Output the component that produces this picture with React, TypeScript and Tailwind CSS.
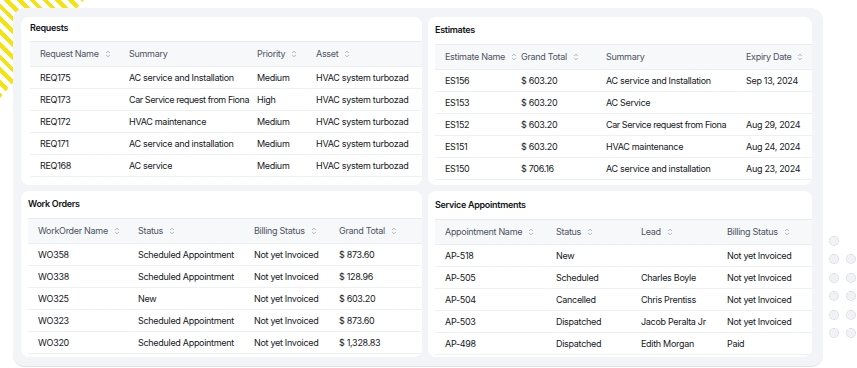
import React from 'react';

type Col = { label: string; sort: boolean };

type CardProps = {
    title: string;
    cols: Col[];
    rows: string[][];
    grid: string;
    box: string;
    head: string;
};

function SortIcon() {
    return (
        <svg width="6" height="8" viewBox="0 0 6 8" className="ml-[6px] shrink-0">
            <path d="M1.2 3 L3 1.2 L4.8 3 M1.2 5 L3 6.8 L4.8 5" fill="none" stroke="#a3a8b3" strokeWidth="0.9" />
        </svg>
    );
}

function TableCard({ title, cols, rows, grid, box, head }: CardProps) {
    return (
        <div className={`bg-white rounded-lg overflow-hidden ${box}`}>
            <div className={`text-[9px] leading-[12px] font-semibold text-[#111418] ${head}`}>{title}</div>
            <div className="border-t border-[#e8eaee]">
                <div className={`grid ${grid} h-[25px] items-center bg-[#f7f8fa] border-b border-[#eceef2] text-[#4d5462]`}>
                    {cols.map((c) => (
                        <div key={c.label} className="flex items-center pl-[10px] whitespace-nowrap">
                            <span>{c.label}</span>
                            {c.sort && <SortIcon />}
                        </div>
                    ))}
                </div>
                {rows.map((r, i) => (
                    <div key={i} className={`grid ${grid} h-[22px] items-center border-b border-[#eef0f3] text-[#15181d]`}>
                        {r.map((v, j) => (
                            <div key={j} className={`pl-[10px] whitespace-nowrap ${v.length > 28 ? 'tracking-[-0.42px]' : ''}`}>
                                {v}
                            </div>
                        ))}
                    </div>
                ))}
            </div>
        </div>
    );
}

function Dot() {
    return <div className="w-[10px] h-[10px] rounded-full border border-dotted border-[#cdd1d8] bg-[#f1f2f5]" />;
}

export default function App() {
    const dotRows = [false, true, true, true, true, true];
    return (
        <div className="relative w-[857px] h-[368px] bg-white overflow-hidden text-[9px] tracking-[-0.3px]" style={{ fontFamily: 'Inter, "Noto Sans", sans-serif' }}>
            {/* hazard stripes behind the panel */}
            <div className="absolute left-0 top-0 w-[84px] h-[98px] [clip-path:polygon(0_0,100%_0,0_100%)] bg-[repeating-linear-gradient(45deg,#f4e40c_0px,#f4e40c_4px,transparent_4px,transparent_9px)]" />

            {/* dotted circles on the right */}
            <div className="absolute left-[829px] top-[236px] flex flex-col gap-[8.4px]">
                {dotRows.map((two, i) => (
                    <div key={i} className="flex gap-[7px]">
                        <Dot />
                        {two && <Dot />}
                    </div>
                ))}
            </div>

            <div className="relative ml-[13px] mt-[8px] w-[810px] h-[359px] rounded-xl bg-[#f3f4f8] border-b border-[#dfe2e7] pt-[9px] pl-[8px]">
                <div className="grid grid-cols-[401px_384px] gap-x-[6px] gap-y-[6px]">
                    <TableCard
                        title="Requests"
                        box="h-[168px] pl-[9px]"
                        head="pt-[5px] pb-[7px]"
                        grid="grid-cols-[89px_128px_59px_116px]"
                        cols={[
                            { label: 'Request Name', sort: true },
                            { label: 'Summary', sort: false },
                            { label: 'Priority', sort: true },
                            { label: 'Asset', sort: true },
                        ]}
                        rows={[
                            ['REQ175', 'AC service and Installation', 'Medium', 'HVAC system turbozad'],
                            ['REQ173', 'Car Service request from Fiona', 'High', 'HVAC system turbozad'],
                            ['REQ172', 'HVAC maintenance', 'Medium', 'HVAC system turbozad'],
                            ['REQ171', 'AC service and installation', 'Medium', 'HVAC system turbozad'],
                            ['REQ168', 'AC service', 'Medium', 'HVAC system turbozad'],
                        ]}
                    />
                    <TableCard
                        title="Estimates"
                        box="h-[168px] pl-[7px]"
                        head="pt-[7px] pb-[8px]"
                        grid="grid-cols-[76px_85px_140px_76px]"
                        cols={[
                            { label: 'Estimate Name', sort: true },
                            { label: 'Grand Total', sort: true },
                            { label: 'Summary', sort: false },
                            { label: 'Expiry Date', sort: true },
                        ]}
                        rows={[
                            ['ES156', '$ 603.20', 'AC service and Installation', 'Sep 13, 2024'],
                            ['ES153', '$ 603.20', 'AC Service', ''],
                            ['ES152', '$ 603.20', 'Car Service request from Fiona', 'Aug 29, 2024'],
                            ['ES151', '$ 603.20', 'HVAC maintenance', 'Aug 24, 2024'],
                            ['ES150', '$ 706.16', 'AC service and installation', 'Aug 23, 2024'],
                        ]}
                    />
                    <TableCard
                        title="Work Orders"
                        box="h-[166px] pl-[7px]"
                        head="pt-[7px] pb-[8px]"
                        grid="grid-cols-[100px_116px_85px_93px]"
                        cols={[
                            { label: 'WorkOrder Name', sort: true },
                            { label: 'Status', sort: true },
                            { label: 'Billing Status', sort: true },
                            { label: 'Grand Total', sort: true },
                        ]}
                        rows={[
                            ['WO358', 'Scheduled Appointment', 'Not yet Invoiced', '$ 873.60'],
                            ['WO338', 'Scheduled Appointment', 'Not yet Invoiced', '$ 128.96'],
                            ['WO325', 'New', 'Not yet Invoiced', '$ 603.20'],
                            ['WO323', 'Scheduled Appointment', 'Not yet Invoiced', '$ 873.60'],
                            ['WO320', 'Scheduled Appointment', 'Not yet Invoiced', '$ 1,328.83'],
                        ]}
                    />
                    <TableCard
                        title="Service Appointments"
                        box="h-[166px] pl-[7px]"
                        head="pt-[8px] pb-[8px]"
                        grid="grid-cols-[111px_85px_86px_95px]"
                        cols={[
                            { label: 'Appointment Name', sort: true },
                            { label: 'Status', sort: true },
                            { label: 'Lead', sort: true },
                            { label: 'Billing Status', sort: true },
                        ]}
                        rows={[
                            ['AP-518', 'New', '', 'Not yet Invoiced'],
                            ['AP-505', 'Scheduled', 'Charles Boyle', 'Not yet Invoiced'],
                            ['AP-504', 'Cancelled', 'Chris Prentiss', 'Not yet Invoiced'],
                            ['AP-503', 'Dispatched', 'Jacob Peralta Jr', 'Not yet Invoiced'],
                            ['AP-498', 'Dispatched', 'Edith Morgan', 'Paid'],
                        ]}
                    />
                </div>
            </div>
        </div>
    );
}
